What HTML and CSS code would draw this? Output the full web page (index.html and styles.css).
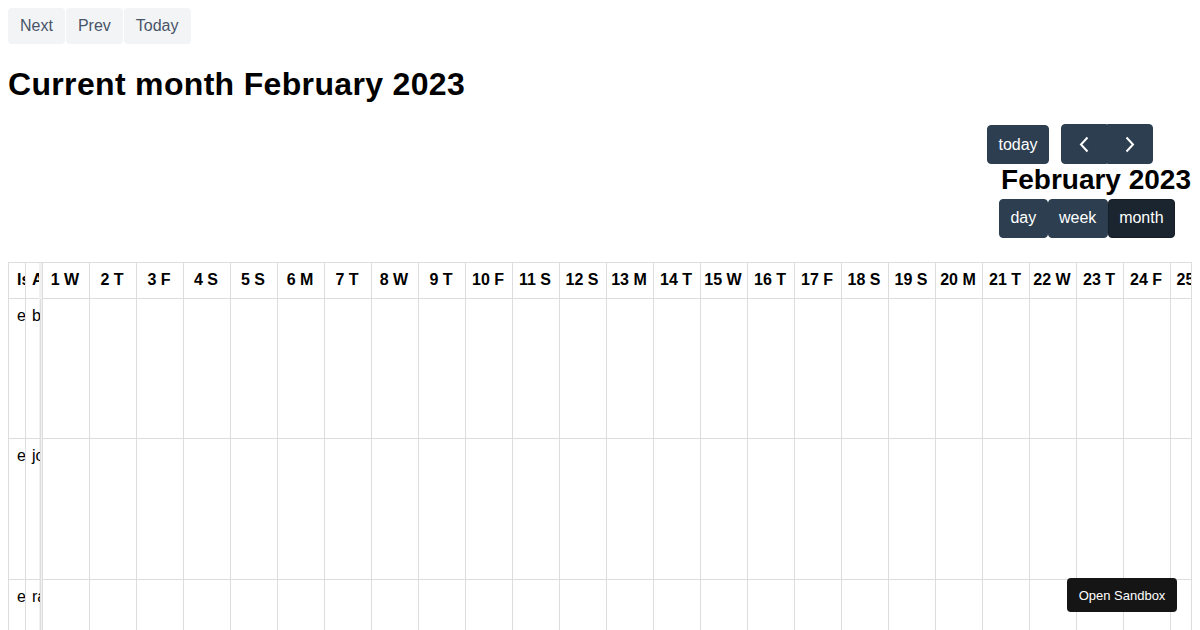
FILE: index.html
```html
<!DOCTYPE html>
<html lang="en">
<head>
<meta charset="utf-8">
<title>Calendar</title>
<link rel="stylesheet" href="styles.css">
</head>
<body>
<div class="nav">
  <button class="nav-btn">Next</button>
  <button class="nav-btn">Prev</button>
  <button class="nav-btn">Today</button>
</div>
<h1 class="heading">Current month February 2023</h1>

<div class="cal">
  <div class="toolbar">
    <div class="chunk-nav">
      <button class="fc-btn">today</button>
      <div class="btn-group">
        <button class="fc-btn icon-btn icon-left" aria-label="prev"><svg width="24" height="24" viewBox="0 0 24 24"><path d="M15.5 5.5 L9 12.5 L15.5 19.5" fill="none" stroke="#fff" stroke-width="2"/></svg></button>
        <button class="fc-btn icon-btn icon-right" aria-label="next"><svg width="24" height="24" viewBox="0 0 24 24"><path d="M8.5 5.5 L15 12.5 L8.5 19.5" fill="none" stroke="#fff" stroke-width="2"/></svg></button>
      </div>
    </div>
    <h2 class="title">February 2023</h2>
    <div class="chunk-views">
      <button class="fc-btn">day</button>
      <button class="fc-btn">week</button>
      <button class="fc-btn active">month</button>
    </div>
  </div>

  <div class="view">
    <div class="grid" id="grid">
      <div class="cell head dg">Issue</div>
      <div class="cell head dg">Assignee</div>
      <div class="divider"></div>
    </div>
  </div>
</div>

<button class="sandbox">Open Sandbox</button>

<script src="app.js"></script>
</body>
</html>
```

FILE: app.js
```js
(function () {
  var grid = document.getElementById('grid');
  var days = ['W', 'T', 'F', 'S', 'S', 'M', 'T'];
  var i;
  for (i = 1; i <= 28; i++) {
    var h = document.createElement('div');
    h.className = 'cell head slot-head';
    h.textContent = i + ' ' + days[(i - 1) % 7];
    grid.appendChild(h);
  }
  var rows = [['eng', 'bob'], ['eng', 'john'], ['eng', 'rachel']];
  rows.forEach(function (r, ri) {
    var a = document.createElement('div');
    a.className = 'cell body dg row' + ri;
    a.textContent = r[0];
    grid.appendChild(a);
    var b = document.createElement('div');
    b.className = 'cell body dg';
    b.textContent = r[1];
    grid.appendChild(b);
    for (var s = 0; s < 28; s++) {
      var c = document.createElement('div');
      c.className = 'cell body slot';
      grid.appendChild(c);
    }
  });
})();
```

FILE: styles.css
```css
html, body {
  margin: 0;
  padding: 0;
}
body {
  margin: 8px;
  font-family: "Liberation Sans", Arial, sans-serif;
  font-size: 16px;
  color: #000;
  background: #fff;
}
button {
  font-family: inherit;
  cursor: pointer;
}

.nav {
  display: flex;
  gap: 1px;
}
.nav-btn {
  border: none;
  margin: 0;
  background: #f3f4f6;
  color: #475569;
  font-size: 16px;
  line-height: 24px;
  padding: 6px 12px;
  border-radius: 4px;
}

.heading {
  font-size: 32px;
  font-weight: bold;
  letter-spacing: 0.33px;
  margin: 22px 0 21px;
  line-height: 37px;
}

.cal {
  width: 1184px;
}
.toolbar {
  display: flex;
  flex-direction: column;
  align-items: flex-end;
  margin-bottom: 24px;
}
.chunk-nav {
  display: flex;
  align-items: flex-end;
  gap: 12px;
  margin-right: 39px;
}
.btn-group {
  display: flex;
}
.fc-btn {
  margin: 0;
  background: #2c3e50;
  border: 1px solid #2c3e50;
  color: #fff;
  font-size: 16px;
  line-height: 24px;
  padding: 6.4px 10.4px;
  border-radius: 4px;
  height: 38.8px;
}
.fc-btn.active {
  background: #1a252f;
  border-color: #151e27;
}
.icon-btn {
  width: 46px;
  height: 40px;
  padding: 0;
  display: flex;
  align-items: center;
  justify-content: center;
}
.icon-left {
  border-radius: 4px 0 0 4px;
}
.icon-right {
  border-radius: 0 4px 4px 0;
}
.title {
  margin: 0 1px 0 0;
  font-size: 28px;
  font-weight: bold;
  line-height: 32px;
}
.chunk-views {
  display: flex;
  margin-top: 3px;
  margin-right: 17px;
}

.view {
  border: 1px solid #ddd;
  overflow: hidden;
  height: 500px;
}
.grid {
  display: grid;
  grid-template-columns: 15px 15px 4px repeat(28, 47px);
  grid-template-rows: 36px 140px 141px 141px;
}
.cell {
  box-sizing: border-box;
  border-right: 1px solid #ddd;
  border-bottom: 1px solid #ddd;
  overflow: hidden;
  white-space: nowrap;
}
.head {
  font-weight: bold;
}
.dg {
  padding: 8px;
  line-height: 18.4px;
}
.slot-head {
  display: flex;
  align-items: center;
  justify-content: center;
  padding-right: 2px;
}
.divider {
  grid-column: 3;
  grid-row: 1 / -1;
  background: #f1f1f1;
  border-right: 1px solid #ddd;
  box-sizing: border-box;
}

.sandbox {
  position: fixed;
  right: 23px;
  bottom: 18px;
  width: 110px;
  height: 34px;
  border: none;
  border-radius: 4px;
  background: #151515;
  color: #fff;
  font-size: 13px;
  padding: 0;
}
```
